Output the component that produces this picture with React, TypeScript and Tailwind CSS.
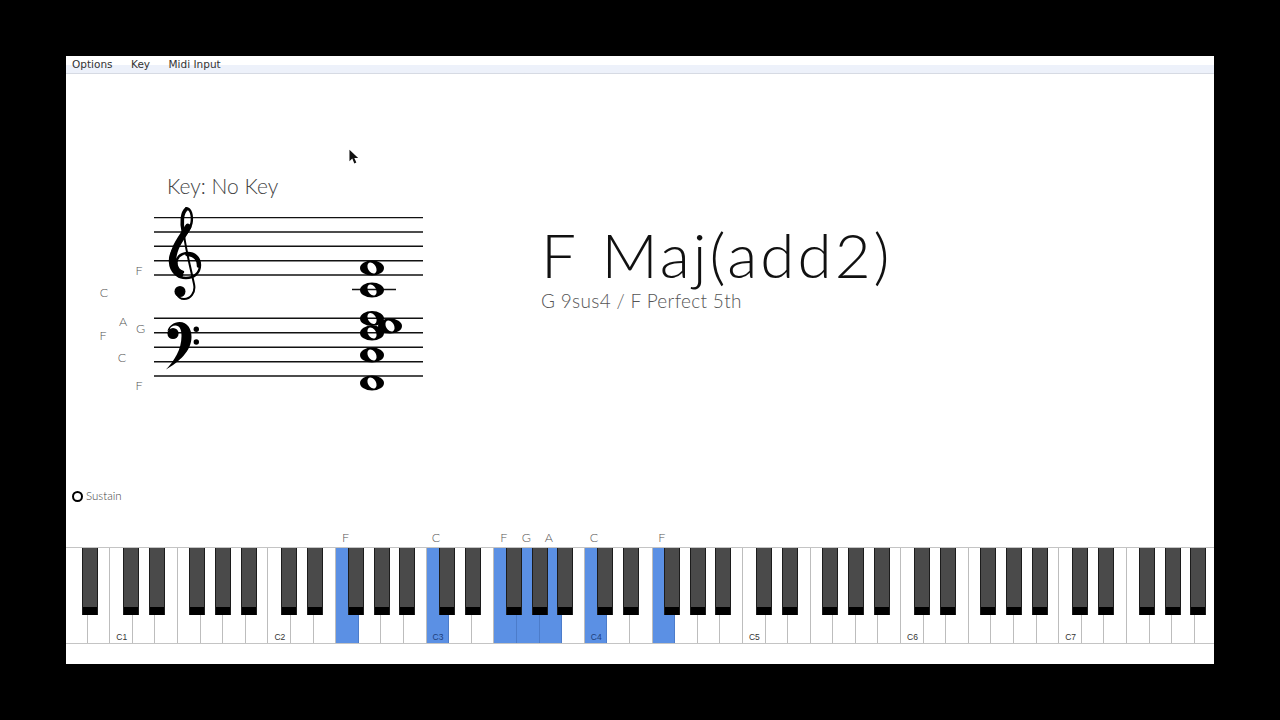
import React from 'react';

const TOTAL_WHITE = 51;
const WHITE_W = 22.6;
const C1_X = 44.3; // x of C1 inside the window
const BLACK_OFFSETS = [12.4, 38.4, 79, 105, 130.4];

// white key index -> label under the key
const OCTAVE_LABELS: Record<number, string> = { 2: 'C1', 9: 'C2', 16: 'C3', 23: 'C4', 30: 'C5', 37: 'C6', 44: 'C7' };
// white key index -> sounding note
const ACTIVE: Record<number, string> = { 12: 'F', 16: 'C', 19: 'F', 20: 'G', 21: 'A', 23: 'C', 26: 'F' };

const blackKeys: number[] = [16];
for (let o = 0; o < 7; o++) {
    BLACK_OFFSETS.forEach((off) => blackKeys.push(C1_X + o * 7 * WHITE_W + off));
}

const NOTE_PATH = 'M-12 0A12 7.5 0 1 0 12 0A12 7.5 0 1 0-12 0ZM-3 -5.2A6 4 60 1 0 3 5.2A6 4 60 1 0-3 -5.2Z';

const Note = ({ x, y }: { x: number; y: number }) => (
    <path d={NOTE_PATH} transform={`translate(${x} ${y})`} fill="#000" fillRule="evenodd" />
);

const Staff = () => (
    <svg viewBox="66 200 370 200" className="w-[370px] h-[200px]">
        <g stroke="#111" strokeWidth="1.4">
            <line x1="154" y1="217.6" x2="423" y2="217.6" />
            <line x1="154" y1="232" x2="423" y2="232" />
            <line x1="154" y1="246.3" x2="423" y2="246.3" />
            <line x1="154" y1="260.8" x2="423" y2="260.8" />
            <line x1="154" y1="275" x2="423" y2="275" />
            <line x1="154" y1="318.3" x2="423" y2="318.3" />
            <line x1="154" y1="332.7" x2="423" y2="332.7" />
            <line x1="154" y1="347.2" x2="423" y2="347.2" />
            <line x1="154" y1="361.7" x2="423" y2="361.7" />
            <line x1="154" y1="376" x2="423" y2="376" />
            <line x1="352" y1="289.5" x2="396" y2="289.5" />
        </g>
        {/* treble clef */}
        <g fill="none" stroke="#000" strokeLinecap="round">
            <path d="M186 208.5C191 208 192.7 216 191.5 223C190 231 184 236 179 242C173 248 169.5 254 170 262C170.5 272 178 278 186 278C194 278 200 273 200 265C200 257 194 252.5 187 253C180 253.5 176 258 176.5 264C177 268.5 180 271 183 272" strokeWidth="2.4" />
            <path d="M188 227C182 238 172.5 247 173 262C173.5 268 176.5 272 180 274.5" strokeWidth="6.5" />
            <path d="M187 254.5C195 254.5 199 260 198.5 266" strokeWidth="3.6" />
            <path d="M186.5 209C182 212.5 181 222 183.5 233" strokeWidth="3.6" />
            <path d="M183.5 230C184.5 245 190 265 194 284C196 293 190 299 184 299C181 299 178 297 177.5 294" strokeWidth="2" />
        </g>
        <circle cx="180" cy="291.5" r="5.5" fill="#000" />
        {/* bass clef */}
        <path d="M167.5 331C168.5 326 174 322 179.5 322C187.5 322 191.5 329 191.5 337C191.5 351 179 362 166 369.5C174 361 181.5 350 181.5 336C181.5 329.5 179.5 325.5 175.5 325.5C172.5 325.5 170 327 169.5 330Z" fill="#000" />
        <circle cx="173" cy="333.5" r="5.6" fill="#000" />
        <circle cx="196.3" cy="329.3" r="2.7" fill="#000" />
        <circle cx="196.3" cy="342" r="2.7" fill="#000" />
        {/* chord */}
        <Note x={372} y={268} />
        <Note x={372} y={290} />
        <Note x={372} y={318.5} />
        <Note x={372} y={333} />
        <Note x={390} y={326} />
        <Note x={372} y={355} />
        <Note x={372} y={383} />
        {/* note names */}
        <g fill="#555" fontSize="12.5" fontWeight="300" textAnchor="middle">
            <text x="139" y="274.5">F</text>
            <text x="104" y="297">C</text>
            <text x="123" y="325.5">A</text>
            <text x="140.5" y="332.5">G</text>
            <text x="103" y="339.5">F</text>
            <text x="122" y="361.5">C</text>
            <text x="139" y="389.5">F</text>
        </g>
    </svg>
);

const Cursor = () => (
    <svg viewBox="0 0 12 17" className="absolute left-[283px] top-[93px] w-[11px] h-[16px]">
        <path d="M0.5 0.5V13L3.6 10.2L5.8 15.5L8 14.6L5.8 9.5H10Z" fill="#111" />
    </svg>
);

export default function App() {
    return (
        <div className="w-[1280px] h-[720px] bg-black pt-[56px] pl-[66px] overflow-hidden font-['Lato',sans-serif]">
            <div className="relative w-[1148px] h-[608px] bg-white flex flex-col overflow-hidden">
                <div className="h-[18px] flex gap-[18.5px] pl-[6px] text-[10.5px] leading-[17px] text-[#333] font-['DejaVu_Sans',sans-serif] border-b border-[#d6dae3] bg-gradient-to-b from-white from-50% to-[#edf1fa] to-50%">
                    <span>Options</span>
                    <span>Key</span>
                    <span>Midi Input</span>
                </div>
                <Cursor />

                <div className="h-[326px] flex">
                    <div className="w-[475px] pt-[99px]">
                        <div className="pl-[101px] h-[27px] text-[21px] leading-[26px] font-light text-[#444]">Key: No Key</div>
                        <Staff />
                    </div>
                    <div className="pt-[145px]">
                        <div className="h-[70px] text-[62px] leading-[70px] font-light tracking-[3px] [word-spacing:4px] text-[#111] whitespace-nowrap">F Maj(add2)</div>
                        <div className="text-[19px] leading-[24px] font-light tracking-[0.32px] text-[#555] whitespace-nowrap">G 9sus4 / F Perfect 5th</div>
                    </div>
                </div>

                <div className="mt-[89px] h-[14px] pl-[6px] flex items-center gap-[3px]">
                    <span className="w-[11px] h-[11px] rounded-full border-2 border-black" />
                    <span className="text-[11.5px] font-light text-[#444]">Sustain</span>
                </div>

                <div className="mt-[27px] h-[17px] flex -ml-[0.9px]">
                    {Array.from({ length: TOTAL_WHITE }, (_, i) => (
                        <span key={i} className="w-[22.6px] shrink-0 pr-[4px] text-center text-[12.5px] leading-[15px] font-light text-[#555]">
                            {ACTIVE[i]}
                        </span>
                    ))}
                </div>

                <div className="relative h-[97px] overflow-hidden border-y border-[#c4c4c4]">
                    <div className="flex h-full -ml-[0.9px]">
                        {Array.from({ length: TOTAL_WHITE }, (_, i) => {
                            const on = i in ACTIVE;
                            return (
                                <div
                                    key={i}
                                    className={`w-[22.6px] h-full shrink-0 border-r flex items-end pl-[6px] ${on ? 'bg-[#5b90e4] border-[#4c7cca]' : 'border-[#bdbdbd]'}`}
                                >
                                    {OCTAVE_LABELS[i] && (
                                        <span className={`text-[8.5px] leading-[11px] font-['Liberation_Sans',sans-serif] ${on ? 'text-[#1d3f7c]' : 'text-[#333]'}`}>
                                            {OCTAVE_LABELS[i]}
                                        </span>
                                    )}
                                </div>
                            );
                        })}
                    </div>
                    {blackKeys.map((x) => (
                        <div
                            key={x}
                            className="absolute top-0 w-[16px] h-[67px] bg-[#4a4a4a] border-x border-[#1c1c1c] flex flex-col justify-end"
                            style={{ left: x }}
                        >
                            <div className="h-[8px] bg-black" />
                        </div>
                    ))}
                </div>
            </div>
        </div>
    );
}
